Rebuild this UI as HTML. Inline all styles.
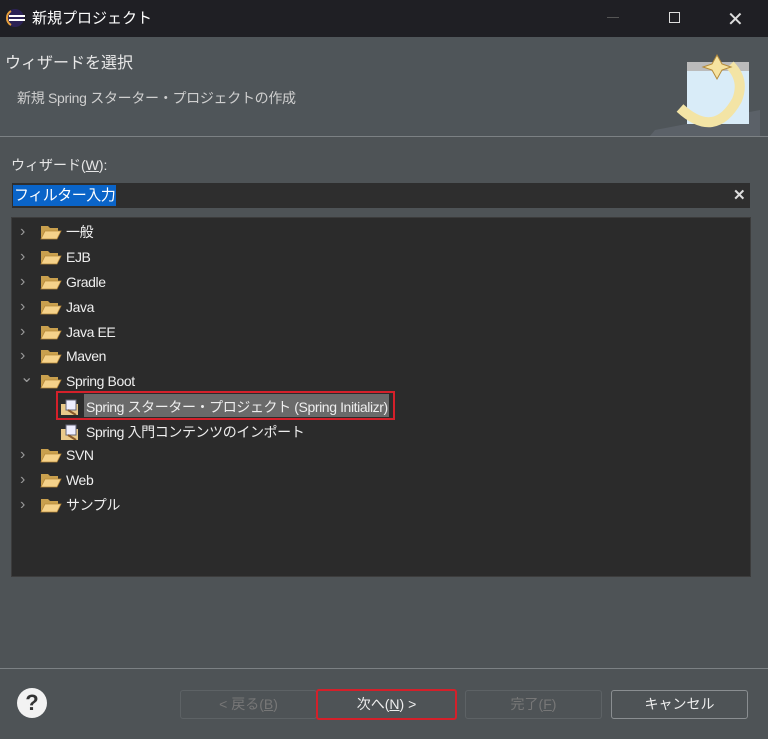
<!DOCTYPE html>
<html><head><meta charset="utf-8"><style>
*{margin:0;padding:0;box-sizing:border-box}
body{width:768px;height:739px;overflow:hidden;background:#4e5356;font-family:"Liberation Sans","Noto Sans CJK JP",sans-serif;color:#e6e6e6;position:relative}
.abs{position:absolute}
.title{left:0;top:0;width:768px;height:37px;background:#1f1f24}
.hdr{left:0;top:37px;width:768px;height:99px;background:#4f5559}
.row{position:absolute;left:20px;height:24px;font-size:14px;letter-spacing:-0.4px;line-height:24px;display:flex;align-items:center;white-space:nowrap}
.chev{width:12px;color:#999;font-size:12px;margin-right:8px}
.fold{width:22px;height:16px;margin-right:4px}
.btn{position:absolute;top:690px;height:29px;border:1px solid #6a6f72;border-radius:3px;font-size:14px;text-align:center;line-height:27px}
</style></head><body>
<div class="abs title"></div>
<svg class="abs" style="left:5px;top:8px" width="22" height="20"><circle cx="10" cy="10" r="9" fill="#2c2255"/><path d="M2 10 A8 8 0 0 1 6 3" stroke="#e8a03a" stroke-width="2" fill="none"/><path d="M2 10 A8 8 0 0 0 6 17" stroke="#e8a03a" stroke-width="2" fill="none"/><rect x="4" y="7" width="16" height="2" fill="#fff"/><rect x="4" y="11" width="16" height="2" fill="#fff"/></svg>
<div class="abs" style="left:32px;top:7px;font-size:15px;color:#fff">新規プロジェクト</div>
<div class="abs" style="left:607px;top:17px;width:12px;height:1px;background:#555"></div>
<div class="abs" style="left:669px;top:12px;width:11px;height:11px;border:1.5px solid #ddd"></div>
<div class="abs" style="left:727px;top:7px;font-size:20px;color:#ddd">✕</div>
<div class="abs hdr"></div>
<div class="abs" style="left:5px;top:49px;font-size:16px;color:#e8e8e8">ウィザードを選択</div>
<div class="abs" style="left:17px;top:88px;font-size:14px;color:#cfcfcf;letter-spacing:-0.3px">新規 Spring スターター・プロジェクトの作成</div>
<svg class="abs" style="left:645px;top:40px" width="115" height="96"><polygon points="10,90 115,70 115,96 5,96" fill="#5b6168"/><rect x="42" y="22" width="62" height="62" fill="#d9ecf8"/><rect x="42" y="22" width="62" height="9" fill="#bbb"/><path d="M35 68 Q70 100 92 60 Q100 40 85 25" stroke="#f3e4a5" stroke-width="10" fill="none"/><path d="M72 15 L77 24 L86 27 L77 30 L72 39 L67 30 L58 27 L67 24Z" fill="#f6e3a0" stroke="#b48a3a"/></svg>
<div class="abs" style="left:0;top:136px;width:768px;height:1px;background:#7c8184"></div>
<div class="abs" style="left:11px;top:155px;font-size:14px">ウィザード(<u>W</u>):</div>
<div class="abs" style="left:12px;top:183px;width:738px;height:25px;background:#2e2e2e"></div>
<div class="abs" style="left:13px;top:185px;height:21px;padding:0 1px;background:#0a64c8;color:#fff;font-size:15px;line-height:21px;letter-spacing:-0.5px">フィルター入力</div>
<div class="abs" style="left:733px;top:186px;font-size:15px;color:#ddd;font-weight:bold">✕</div>
<div class="abs" style="left:11px;top:217px;width:740px;height:360px;background:#2b2b2b;border:1px solid #3c3c3c"></div>
<div class="abs" style="left:84px;top:394px;width:305px;height:23px;background:#6a6a6a"></div>
<div id="tree"></div>
<div class="abs" style="left:56px;top:391px;width:339px;height:29px;border:2px solid #d4202a"></div>
<script>
var items=[["一般",230],["EJB",255],["Gradle",280],["Java",305],["Java EE",330],["Maven",354],["Spring Boot",379,1],["Spring スターター・プロジェクト (Spring Initializr)",405,2],["Spring 入門コンテンツのインポート",430,2],["SVN",453],["Web",478],["サンプル",503]];
var h="";
items.forEach(function(it){
var lvl=it[2]==2;
var chev=it[2]==1?"⌄":"›";
var fold='<svg class="fold" viewBox="0 0 22 16"><path d="M1 2h7l2 2h8v3H6L1 15Z" fill="#c9a04e"/><path d="M5 7h16l-4 8H1Z" fill="#f5d28a" stroke="#b98a3a" stroke-width=".8"/></svg>';
var ic=lvl?'<svg class="fold" viewBox="0 0 22 16"><path d="M1 5h17v11H1Z" fill="#e9c98a"/><rect x="6" y="1" width="10" height="10" fill="#eef" stroke="#667"/><path d="M8 11l8 5" stroke="#8a5a2a" stroke-width="2"/></svg>':fold;
h+='<div class="row" style="top:'+(it[1]-10)+'px;left:'+(lvl?60:20)+'px">'+(lvl?'':'<span class="chev" style="'+(it[2]==1?'font-size:16px;margin-top:-6px':'font-size:16px')+'">'+chev+'</span>')+ic+'<span style="color:#eee;position:relative;z-index:2">'+it[0]+'</span></div>';
});
document.getElementById("tree").innerHTML=h;
</script>
<div class="abs" style="left:0;top:668px;width:768px;height:1px;background:#7c8184"></div>
<div class="abs" style="left:17px;top:688px;width:30px;height:30px;border-radius:50%;background:#f2f2f2;color:#333;font-size:22px;font-weight:bold;text-align:center;line-height:30px">?</div>
<div class="btn" style="left:180px;width:137px;color:#777;border-color:#5d6265">&lt; 戻る(<u>B</u>)</div>
<div class="btn" style="left:316px;width:141px;top:689px;height:31px;border:2px solid #d4202a;color:#eee">次へ(<u>N</u>) &gt;</div>
<div class="btn" style="left:465px;width:137px;color:#777;border-color:#5d6265">完了(<u>F</u>)</div>
<div class="btn" style="left:611px;width:137px;color:#eee;border-color:#8a8e91">キャンセル</div>
</body></html>
